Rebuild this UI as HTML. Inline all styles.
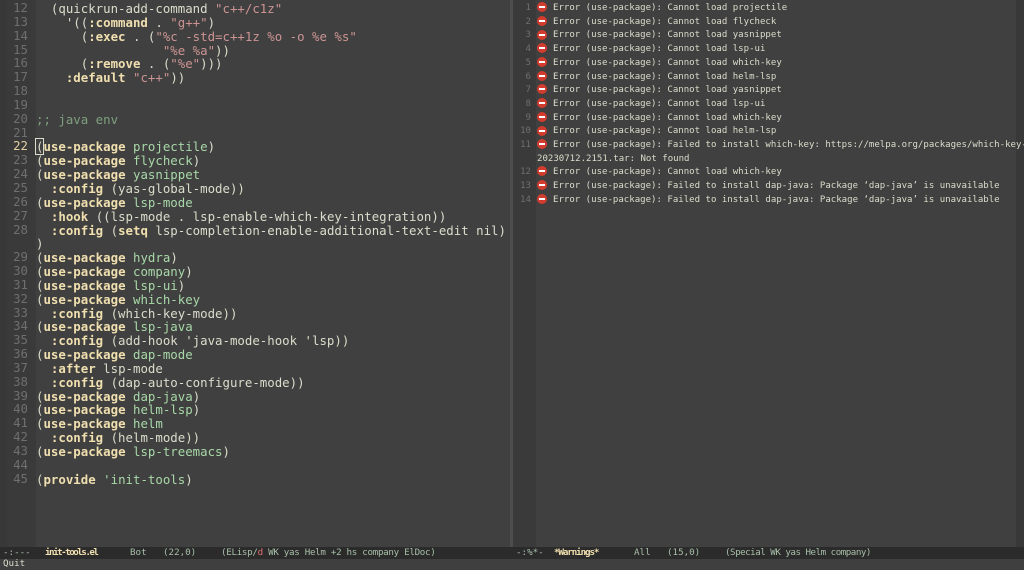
<!DOCTYPE html>
<html><head><meta charset="utf-8"><style>
*{margin:0;padding:0;box-sizing:border-box}
body{width:1024px;height:569px;background:#3f3f3f;overflow:hidden;position:relative;font-family:"DejaVu Sans Mono","Liberation Mono",monospace;color:#dcdccc}
.abs{position:absolute}
#lfr{left:0;top:0;width:7px;height:547px;background:#383838}
#lg{left:7px;top:0;width:29px;height:547px;background:#3a3a3a}
#lc{left:36px;top:0;width:474px;height:547px;background:#404040}
#div{left:510px;top:0;width:3px;height:547px;background:#4e4e4e}
#rg{left:513px;top:0;width:23px;height:547px;background:#3a3a3a}
#rc{left:536px;top:0;width:480px;height:547px;background:#404040}
#rfr{left:1016px;top:0;width:8px;height:547px;background:#383838}
pre{font-family:inherit;white-space:pre;position:absolute}
#lnum{left:7px;top:2px;width:21px;text-align:right;font-size:12.35px;line-height:13.85px;color:#6f6f6f}
#code{left:36px;top:2px;font-size:12.4px;line-height:13.85px}
#rnum{left:513px;top:2px;width:18px;text-align:right;font-size:9.05px;line-height:13.7px;color:#6f6f6f}
#rtext{left:553px;top:2px;font-size:9.05px;line-height:13.7px}
.k{color:#f0dfaf;font-weight:bold}.p{color:#a8d8a8}.s{color:#cc9393}.c{color:#7f9f7f}
.ic{position:absolute;left:537px;width:10px;height:10px;border-radius:50%;background:#d23b2e}
.ic:after{content:"";position:absolute;left:2px;top:4px;width:6px;height:2px;background:#fff}
#ml{left:0;top:547px;width:1024px;height:12px;background:#2b2b2b}
#mb{left:0;top:559px;width:1024px;height:10px;background:#3f3f3f}
.m{position:absolute;font-size:9.2px;line-height:12px;top:547px;color:#a8bfa8;white-space:pre}
.cur{outline:1px solid #dcdccc}
</style></head><body>
<div class="abs" id="lfr"></div><div class="abs" id="lg"></div><div class="abs" id="lc"></div>
<div class="abs" id="div"></div><div class="abs" id="rg"></div><div class="abs" id="rc"></div><div class="abs" id="rfr"></div>
<pre id="lnum">12
13
14
15
16
17
18
19
20
21
<span style="color:#e0cfa0">22</span>
23
24
25
26
27
28

29
30
31
32
33
34
35
36
37
38
39
40
41
42
43
44
45</pre>
<pre id="code">  (quickrun-add-command <span class="s">"c++/c1z"</span>
    '((<span class="k">:command</span> . <span class="s">"g++"</span>)
      (<span class="k">:exec</span> . (<span class="s">"%c -std=c++1z %o -o %e %s"</span>
                 <span class="s">"%e %a"</span>))
      (<span class="k">:remove</span> . (<span class="s">"%e"</span>)))
    <span class="k">:default</span> <span class="s">"c++"</span>))


<span class="c">;; java env</span>

<span class="cur">(</span><span class="k">use-package</span> <span class="p">projectile</span>)
(<span class="k">use-package</span> <span class="p">flycheck</span>)
(<span class="k">use-package</span> <span class="p">yasnippet</span>
  <span class="k">:config</span> (yas-global-mode))
(<span class="k">use-package</span> <span class="p">lsp-mode</span>
  <span class="k">:hook</span> ((lsp-mode . lsp-enable-which-key-integration))
  <span class="k">:config</span> (<span class="k">setq</span> lsp-completion-enable-additional-text-edit nil)
)
(<span class="k">use-package</span> <span class="p">hydra</span>)
(<span class="k">use-package</span> <span class="p">company</span>)
(<span class="k">use-package</span> <span class="p">lsp-ui</span>)
(<span class="k">use-package</span> <span class="p">which-key</span>
  <span class="k">:config</span> (which-key-mode))
(<span class="k">use-package</span> <span class="p">lsp-java</span>
  <span class="k">:config</span> (add-hook 'java-mode-hook 'lsp))
(<span class="k">use-package</span> <span class="p">dap-mode</span>
  <span class="k">:after</span> lsp-mode
  <span class="k">:config</span> (dap-auto-configure-mode))
(<span class="k">use-package</span> <span class="p">dap-java</span>)
(<span class="k">use-package</span> <span class="p">helm-lsp</span>)
(<span class="k">use-package</span> <span class="p">helm</span>
  <span class="k">:config</span> (helm-mode))
(<span class="k">use-package</span> <span class="p">lsp-treemacs</span>)

(<span class="k">provide</span> <span class="p">'init-tools</span>)</pre>
<pre id="rnum">1
2
3
4
5
6
7
8
9
10
11

12
13
14</pre>
<div class="ic" style="top:2px"></div><div class="ic" style="top:16px"></div><div class="ic" style="top:30px"></div><div class="ic" style="top:43px"></div><div class="ic" style="top:57px"></div><div class="ic" style="top:71px"></div><div class="ic" style="top:84px"></div><div class="ic" style="top:98px"></div><div class="ic" style="top:112px"></div><div class="ic" style="top:126px"></div><div class="ic" style="top:139px"></div><div class="ic" style="top:166px"></div><div class="ic" style="top:180px"></div><div class="ic" style="top:194px"></div>
<pre id="rtext">Error (use-package): Cannot load projectile
Error (use-package): Cannot load flycheck
Error (use-package): Cannot load yasnippet
Error (use-package): Cannot load lsp-ui
Error (use-package): Cannot load which-key
Error (use-package): Cannot load helm-lsp
Error (use-package): Cannot load yasnippet
Error (use-package): Cannot load lsp-ui
Error (use-package): Cannot load which-key
Error (use-package): Cannot load helm-lsp
Error (use-package): Failed to install which-key: https://melpa.org/packages/which-key-
<span style="margin-left:-16px">20230712.2151.tar: Not found</span>
Error (use-package): Cannot load which-key
Error (use-package): Failed to install dap-java: Package ‘dap-java’ is unavailable
Error (use-package): Failed to install dap-java: Package ‘dap-java’ is unavailable</pre>
<div class="abs" id="ml"></div><div class="abs" id="mb"></div>
<span class="m" style="left:3px">-:---</span>
<span class="m" style="left:45px;color:#f0dfaf;font-weight:bold;letter-spacing:-1.5px">init-tools.el</span>
<span class="m" style="left:130px">Bot</span>
<span class="m" style="left:163px">(22,0)</span>
<span class="m" style="left:221px;letter-spacing:-0.3px">(ELisp/<span style="color:#e07070">d</span> WK yas Helm +2 hs company ElDoc)</span>
<span class="m" style="left:516px">-:%*-</span>
<span class="m" style="left:554px;color:#f0dfaf;font-weight:bold;letter-spacing:-1.1px">*Warnings*</span>
<span class="m" style="left:634px">All</span>
<span class="m" style="left:667px">(15,0)</span>
<span class="m" style="left:725px;letter-spacing:-0.5px">(Special WK yas Helm company)</span>
<span class="m" style="left:3px;top:558px;color:#dcdccc">Quit</span>
</body></html>
